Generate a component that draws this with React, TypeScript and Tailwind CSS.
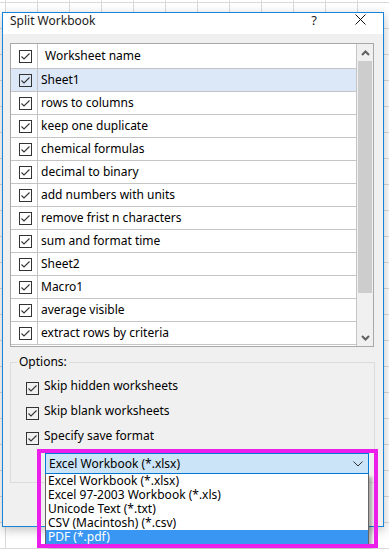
import React from "react";

const Check = () => (
  <span className="w-[13px] h-[13px] border border-[#333333] flex items-center justify-center shrink-0">
    <svg width="11" height="11" viewBox="0 0 11 11">
      <path d="M1.5 5.5 L4 8 L9.5 2.5" stroke="#333333" strokeWidth="1.1" fill="none" />
    </svg>
  </span>
);

const sheets = [
  "Sheet1",
  "rows to columns",
  "keep one duplicate",
  "chemical formulas",
  "decimal to binary",
  "add numbers with units",
  "remove frist n characters",
  "sum and format time",
  "Sheet2",
  "Macro1",
  "average visible",
  "extract rows by criteria",
];

const formats = [
  "Excel Workbook (*.xlsx)",
  "Excel 97-2003 Workbook (*.xls)",
  "Unicode Text (*.txt)",
  "CSV (Macintosh) (*.csv)",
  "PDF (*.pdf)",
];

export default function App() {
  return (
    <div className="relative w-[389px] h-[549px] overflow-hidden bg-white [background-image:linear-gradient(to_right,#dadada_1px,transparent_1px),linear-gradient(to_bottom,#dadada_1px,transparent_1px)] [background-size:32px_26px] [background-position:5px_2px] font-['Noto_Sans',sans-serif] text-[12px] leading-[16px] text-black">
      <div className="absolute left-[2px] top-[12px] w-[382px] h-[515px] border border-[#1883d7] bg-[#f0f0f0] shadow-[0_3px_10px_rgba(0,0,0,0.25)] flex flex-col">
        {/* title bar */}
        <div className="h-[21px] bg-white flex items-start">
          <div className="pl-[7px] text-[#1a1a1a]">Split Workbook</div>
          <div className="ml-auto flex h-full">
            <div className="w-[46px] flex justify-center -mt-[1px] text-[13px] text-[#1a1a1a]">?</div>
            <div className="w-[46px] flex justify-center pt-[1px]">
              <svg width="11" height="11" viewBox="0 0 11 11">
                <path d="M0.5 0.5 L10.5 10.5 M10.5 0.5 L0.5 10.5" stroke="#111" strokeWidth="1" fill="none" />
              </svg>
            </div>
          </div>
        </div>

        {/* list */}
        <div className="mt-[9px] ml-[7px] w-[364px] h-[304px] border border-[#a8a8a8] bg-white flex">
          <div className="flex-1 flex flex-col border-r border-[#c4c4c4] overflow-hidden">
            <div className="flex h-[25px] shrink-0 border-b border-[#c4c4c4]">
              <div className="w-[27px] border-r border-[#c4c4c4] flex items-center pl-[8px]">
                <Check />
              </div>
              <div className="pl-[7px] flex items-center">Worksheet name</div>
            </div>
            {sheets.map((s, i) => (
              <div
                key={s}
                className={
                  "flex h-[23px] shrink-0 border-b border-[#c4c4c4] " +
                  (i === 0 ? "bg-[#dce7f8]" : "")
                }
              >
                <div className="w-[27px] border-r border-[#c4c4c4] flex items-center pl-[8px]">
                  <Check />
                </div>
                <div className="pl-[3px] flex items-center">{s}</div>
              </div>
            ))}
          </div>
          {/* scrollbar */}
          <div className="w-[16px] bg-[#f0f0f0] flex flex-col">
            <div className="h-[17px] flex items-center justify-center">
              <svg width="9" height="6" viewBox="0 0 9 6">
                <path d="M1 5 L4.5 1.5 L8 5" stroke="#606060" strokeWidth="2" fill="none" />
              </svg>
            </div>
            <div className="h-[232px] mx-[1px] bg-[#cdcdcd]" />
            <div className="flex-1" />
            <div className="h-[17px] flex items-center justify-center">
              <svg width="9" height="6" viewBox="0 0 9 6">
                <path d="M1 1 L4.5 4.5 L8 1" stroke="#606060" strokeWidth="2" fill="none" />
              </svg>
            </div>
          </div>
        </div>

        {/* options */}
        <fieldset className="mt-[7px] ml-[7px] w-[365px] border border-[#dcdcdc] pb-[8px]">
          <legend className="ml-[6px] px-[2px]">Options:</legend>
          <div className="pt-[6px] flex flex-col">
            {["Skip hidden worksheets", "Skip blank worksheets", "Specify save format"].map((t) => (
              <div key={t} className="h-[25px] flex items-center gap-[5px] pl-[15px]">
                <Check />
                <span className="-mt-[5px]">{t}</span>
              </div>
            ))}
          </div>
          <div className="relative mt-[2px] ml-[34px] w-[324px] h-[21px]">
            <div className="h-full border border-[#0078d7] bg-[#cce4f7] flex items-center pl-[3px]">
              <span>Excel Workbook (*.xlsx)</span>
              <svg className="ml-auto mr-[5px]" width="10" height="6" viewBox="0 0 10 6">
                <path d="M0.5 0.5 L5 5 L9.5 0.5" stroke="#333" strokeWidth="1" fill="none" />
              </svg>
            </div>
            <div className="absolute left-0 top-full w-[324px] bg-white border-x border-b border-[#646464] shadow-[3px_3px_3px_rgba(0,0,0,0.3)] z-10 flex flex-col">
              {formats.map((f, i) => (
                <div
                  key={f}
                  className={
                    "h-[14px] leading-[14px] pl-[2px] " +
                    (i === 4 ? "bg-[#3996f3] text-white" : "")
                  }
                >
                  {f}
                </div>
              ))}
            </div>
            <div className="absolute left-[-8px] top-[-4px] w-[341px] h-[99px] border-[4px] border-[#ec1ee9] z-20 pointer-events-none" />
          </div>
        </fieldset>
      </div>
    </div>
  );
}
